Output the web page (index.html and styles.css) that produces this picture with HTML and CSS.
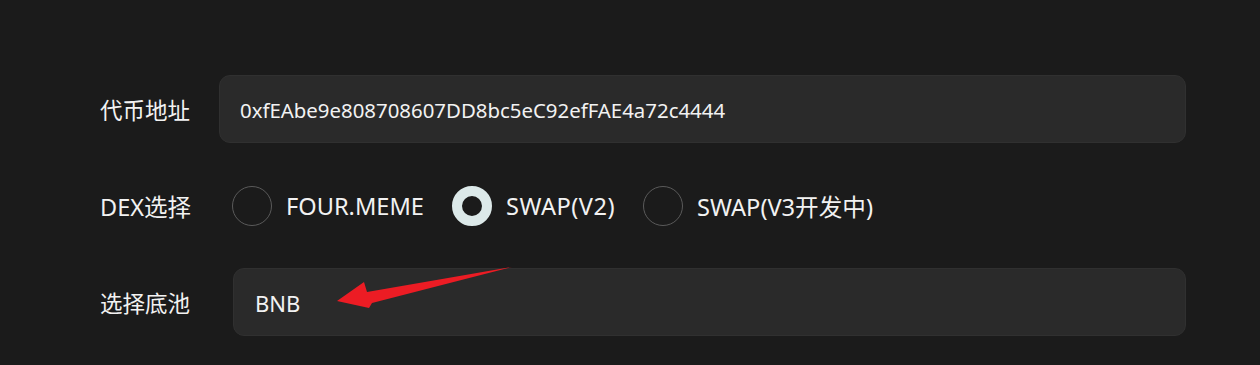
FILE: index.html
```html
<!DOCTYPE html>
<html lang="zh-CN">
<head>
<meta charset="utf-8">
<link rel="stylesheet" href="styles.css">
</head>
<body>
<div class="form">
  <div class="row">
    <label class="label lbl-addr">代币地址</label>
    <div class="field field-addr">0xfEAbe9e808708607DD8bc5eC92efFAE4a72c4444</div>
  </div>
  <div class="row row-radio">
    <label class="label lbl-dex">DEX选择</label>
    <div class="radios">
      <div class="opt"><span class="dot"></span><span class="opt-text">FOUR.MEME</span></div>
      <div class="opt"><span class="dot on"></span><span class="opt-text opt-wide">SWAP(V2)</span></div>
      <div class="opt"><span class="dot"></span><span class="opt-text">SWAP(V3开发中)</span></div>
    </div>
  </div>
  <div class="row">
    <label class="label lbl-pool">选择底池</label>
    <div class="field field-pool">
      <span class="pool-text">BNB</span>
      <svg class="arrow" width="200" height="60" viewBox="320 260 200 60">
        <polygon points="511,267 366,292 363,282 336,301 368,308 371,303" fill="#ec1c24"/>
      </svg>
    </div>
  </div>
</div>
</body>
</html>
```
FILE: styles.css
```css
html, body {
  margin: 0;
  padding: 0;
  background: #1b1b1b;
}
body {
  width: 1260px;
  height: 365px;
  overflow: hidden;
  font-family: "Noto Sans", "Noto Sans CJK SC", sans-serif;
  color: #f2f2f2;
}
.form {
  padding: 75px 0 0 100px;
  display: flex;
  flex-direction: column;
}
.row {
  display: flex;
  align-items: center;
  height: 68px;
}
.row-radio {
  height: 40px;
  margin: 43px 0 42px;
}
.label {
  font-size: 22.5px;
  flex: none;
}
.lbl-addr { width: 119px; }
.lbl-dex { width: 132px; font-size: 23.5px; }
.lbl-pool { width: 133px; }
.field {
  box-sizing: border-box;
  height: 68px;
  background: #2a2a2a;
  border: 1px solid #303030;
  border-radius: 11px;
  display: flex;
  align-items: center;
  font-size: 20.4px;
  position: relative;
  padding-top: 2px;
}
.field-addr {
  width: 967px;
  padding-left: 20px;
}
.field-pool {
  width: 953px;
  padding-left: 21px;
}
.pool-text {
  font-size: 22px;
}
.arrow {
  position: absolute;
  left: 87px;
  top: -9px;
}
.radios {
  display: flex;
  align-items: center;
  gap: 28px;
}
.opt {
  display: flex;
  align-items: center;
  gap: 14px;
}
.dot {
  box-sizing: border-box;
  width: 40px;
  height: 40px;
  border-radius: 50%;
  border: 1.5px solid #5a5a5a;
  flex: none;
}
.dot.on {
  border: 10px solid #dce9e9;
  background: #1b1b1b;
}
.opt-text {
  font-size: 23.6px;
}
.opt-wide {
  letter-spacing: 0.5px;
}
```
